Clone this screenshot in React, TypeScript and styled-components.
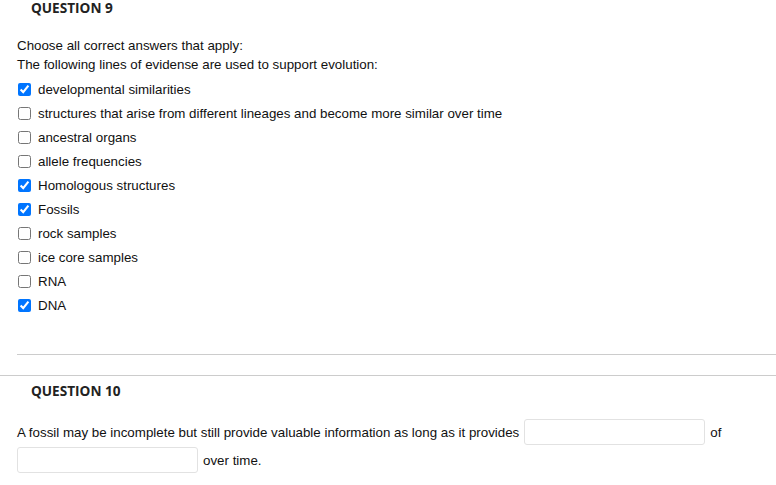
import React from "react";
import styled, { createGlobalStyle } from "styled-components";

const Global = createGlobalStyle`
  html, body { margin: 0; padding: 0; background: #fff; }
  body { font-family: "Liberation Sans", Arial, sans-serif; color: #111; }
`;

const Page = styled.div`
  width: 776px;
  display: flex;
  flex-direction: column;
`;

const QuestionTitle = styled.h2`
  margin: 0;
  padding: ${(p: { $top: number }) => p.$top}px 0 0 31px;
  font-family: "Open Sans", sans-serif;
  font-weight: 700;
  font-size: 13.6px;
  line-height: 16px;
  color: #222;
`;

const Body = styled.div`
  padding: 0 0 0 17px;
  font-size: 13.33px;
  line-height: 19px;
`;

const Prompt = styled.div`
  margin-top: ${(p: { $mt: number }) => p.$mt}px;
`;

const Options = styled.ul`
  list-style: none;
  margin: 3px 0 0;
  padding: 0;
  display: flex;
  flex-direction: column;
`;

const Option = styled.li`
  display: flex;
  align-items: center;
  height: 24px;
`;

const Check = styled.input`
  margin: 0 7px 0 1px;
  width: 13px;
  height: 13px;
`;

const Divider = styled.hr`
  border: none;
  border-top: 1px solid #ccc;
  margin: ${(p: { $mt: number; $ml: number }) => p.$mt}px 0 0 ${(p) => p.$ml}px;
  height: 0;
`;

const FillRow = styled.div`
  display: flex;
  align-items: center;
  height: 26px;
  margin-top: ${(p: { $mt: number }) => p.$mt}px;
  gap: 5px;
`;

const Blank = styled.input`
  box-sizing: border-box;
  width: 181px;
  height: 26px;
  border: 1px solid #e2e2e2;
  border-radius: 3px;
  margin: 0;
  padding: 0 6px;
  font-family: inherit;
  font-size: 13px;
  outline: none;
`;

const options: [string, boolean][] = [
  ["developmental similarities", true],
  ["structures that arise from different lineages and become more similar over time", false],
  ["ancestral organs", false],
  ["allele frequencies", false],
  ["Homologous structures", true],
  ["Fossils", true],
  ["rock samples", false],
  ["ice core samples", false],
  ["RNA", false],
  ["DNA", true],
];

export default function App() {
  return (
    <Page>
      <Global />
      <QuestionTitle $top={0}>QUESTION 9</QuestionTitle>
      <Body>
        <Prompt $mt={20}>Choose all correct answers that apply:</Prompt>
        <Prompt $mt={0}>The following lines of evidense are used to support evolution:</Prompt>
        <Options>
          {options.map(([label, checked]) => (
            <Option key={label}>
              <Check type="checkbox" defaultChecked={checked} />
              <span>{label}</span>
            </Option>
          ))}
        </Options>
      </Body>
      <Divider $mt={37} $ml={17} />
      <Divider $mt={20} $ml={0} />
      <QuestionTitle $top={7}>QUESTION 10</QuestionTitle>
      <Body>
        <FillRow $mt={20}>
          <span>A fossil may be incomplete but still provide valuable information as long as it provides</span>
          <Blank type="text" />
          <span>of</span>
        </FillRow>
        <FillRow $mt={2}>
          <Blank type="text" />
          <span>over time.</span>
        </FillRow>
      </Body>
    </Page>
  );
}
